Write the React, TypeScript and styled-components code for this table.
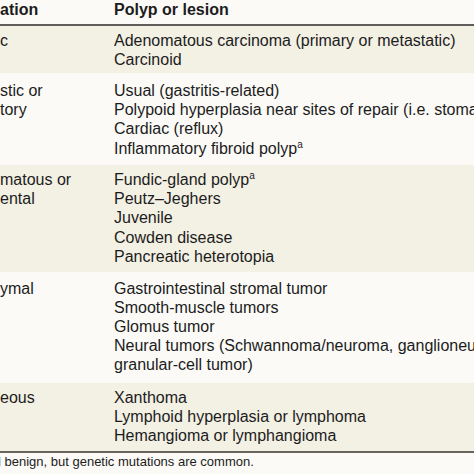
import React from "react";
import styled, { createGlobalStyle } from "styled-components";

const GlobalStyle = createGlobalStyle`
  html, body {
    margin: 0;
    padding: 0;
    background: #fbfaf7;
  }
  body {
    font-family: "Liberation Sans", Arial, sans-serif;
    color: #1c1c1c;
  }
`;

const Page = styled.div`
  width: 474px;
  height: 474px;
  overflow: hidden;
  background: #fbfaf7;
`;

const Table = styled.div`
  display: flex;
  flex-direction: column;
  border-bottom: 2px solid #666560;
`;

const HeadRow = styled.div`
  display: grid;
  grid-template-columns: 114px 1fr;
  padding: 0 0 4.3px;
  border-bottom: 2px solid #5e5d59;
  font-weight: bold;
  font-size: 16px;
  line-height: 19.2px;
`;

const Row = styled.div<{ $tint: boolean; $pt: number; $pb: number }>`
  display: grid;
  grid-template-columns: 114px 1fr;
  padding-top: ${(p) => p.$pt}px;
  padding-bottom: ${(p) => p.$pb}px;
  background: ${(p) => (p.$tint ? "#f3f0e4" : "#fbfaf7")};
  font-size: 16px;
  line-height: 19.2px;
`;

const GroupCell = styled.div`
  white-space: nowrap;
  overflow: hidden;
`;

const ItemCell = styled.div`
  white-space: nowrap;
  overflow: hidden;
`;

const Line = styled.div`
  white-space: nowrap;
`;

const Sup = styled.span`
  font-size: 10px;
  vertical-align: 6px;
  line-height: 0;
`;

const Footnote = styled.p`
  margin: 0;
  padding-top: 1px;
  font-size: 13px;
  line-height: 16px;
  white-space: nowrap;
  text-indent: -2px;
`;

interface Entry {
  group: string[];
  items: React.ReactNode[];
  tint: boolean;
  pt: number;
  pb: number;
}

const rows: Entry[] = [
  {
    group: ["c"],
    items: ["Adenomatous carcinoma (primary or metastatic)", "Carcinoid"],
    tint: true,
    pt: 5,
    pb: 4.1,
  },
  {
    group: ["stic or", "tory"],
    items: [
      "Usual (gastritis-related)",
      "Polypoid hyperplasia near sites of repair (i.e. stomal)",
      "Cardiac (reflux)",
      <>
        Inflammatory fibroid polyp<Sup>a</Sup>
      </>,
    ],
    tint: false,
    pt: 8,
    pb: 7.2,
  },
  {
    group: ["matous or", "ental"],
    items: [
      <>
        Fundic-gland polyp<Sup>a</Sup>
      </>,
      "Peutz–Jeghers",
      "Juvenile",
      "Cowden disease",
      "Pancreatic heterotopia",
    ],
    tint: true,
    pt: 5,
    pb: 6,
  },
  {
    group: ["ymal"],
    items: [
      "Gastrointestinal stromal tumor",
      "Smooth-muscle tumors",
      "Glomus tumor",
      "Neural tumors (Schwannoma/neuroma, ganglioneuroma,",
      "granular-cell tumor)",
    ],
    tint: false,
    pt: 6.5,
    pb: 8.5,
  },
  {
    group: ["eous"],
    items: ["Xanthoma", "Lymphoid hyperplasia or lymphoma", "Hemangioma or lymphangioma"],
    tint: true,
    pt: 4.5,
    pb: 5.9,
  },
];

const App: React.FC = () => (
  <React.Fragment>
    <GlobalStyle />
    <Page>
      <Table>
        <HeadRow>
          <GroupCell>ation</GroupCell>
          <ItemCell>Polyp or lesion</ItemCell>
        </HeadRow>
        {rows.map((row, i) => (
          <Row key={i} $tint={row.tint} $pt={row.pt} $pb={row.pb}>
            <GroupCell>
              {row.group.map((g) => (
                <Line key={g}>{g}</Line>
              ))}
            </GroupCell>
            <ItemCell>
              {row.items.map((item, j) => (
                <Line key={j}>{item}</Line>
              ))}
            </ItemCell>
          </Row>
        ))}
      </Table>
      <Footnote>l benign, but genetic mutations are common.</Footnote>
    </Page>
  </React.Fragment>
);

export default App;
